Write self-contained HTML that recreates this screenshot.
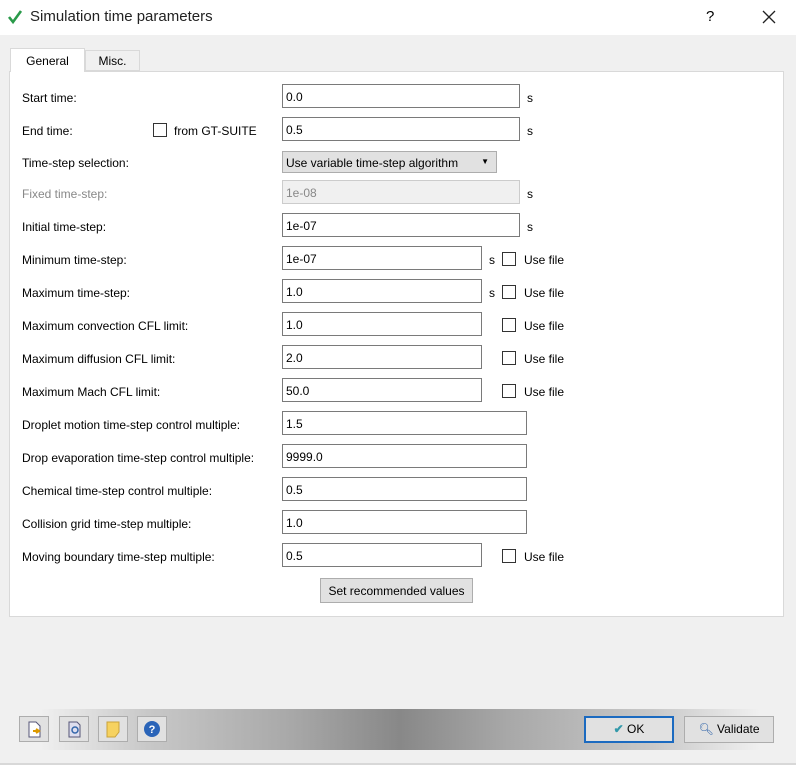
<!DOCTYPE html>
<html><head><style>
body{margin:0;width:796px;height:765px;background:#f0f0f0;font-family:"Liberation Sans",sans-serif;font-size:12px;color:#000;position:relative;overflow:hidden}
.a{position:absolute}
.title{left:0;top:0;width:796px;height:35px;background:#fff}
.in{position:absolute;height:24px;border:1px solid #7a7a7a;background:#fff;box-sizing:border-box;padding:6px 3px 0;font-size:12px;line-height:13px}
.lb{position:absolute;left:22px;line-height:14px}
.cb{position:absolute;width:14px;height:14px;border:1px solid #333;background:#fff;box-sizing:border-box}
.btn{position:absolute;top:716px;width:30px;height:26px;border:1px solid #adadad;background:#e1e1e1;box-sizing:border-box}
</style></head><body>
<div class="a title"></div>
<svg class="a" style="left:7px;top:9px" width="16" height="16"><path d="M2 8 L6 13 L14 2" stroke="#2a9a4a" stroke-width="2.6" fill="none"/></svg>
<div class="a" style="left:30px;top:8px;font-size:15px;color:#222">Simulation time parameters</div>
<div class="a" style="left:706px;top:8px;font-size:15px">?</div>
<svg class="a" style="left:762px;top:10px" width="14" height="14"><path d="M1 1L13 13M13 1L1 13" stroke="#222" stroke-width="1.3"/></svg>
<div class="a" style="left:10px;top:48px;width:75px;height:24px;background:#fff;border:1px solid #d9d9d9;border-bottom:none;box-sizing:border-box;z-index:2;text-align:center;line-height:24px">General</div>
<div class="a" style="left:85px;top:50px;width:55px;height:21px;background:#f0f0f0;border:1px solid #d9d9d9;box-sizing:border-box;text-align:center;line-height:20px">Misc.</div>
<div class="a" style="left:9px;top:71px;width:775px;height:546px;background:#fff;border:1px solid #d9d9d9;box-sizing:border-box"></div>

<div class="lb" style="top:91px">Start time:</div><div class="in" style="left:282px;top:84px;width:238px">0.0</div><div class="a" style="left:527px;top:91px">s</div>
<div class="lb" style="top:124px">End time:</div><div class="cb" style="left:153px;top:123px"></div><div class="a" style="left:174px;top:124px">from GT-SUITE</div><div class="in" style="left:282px;top:117px;width:238px">0.5</div><div class="a" style="left:527px;top:124px">s</div>
<div class="lb" style="top:156px">Time-step selection:</div><div class="a" style="left:282px;top:151px;width:215px;height:22px;background:#e1e1e1;border:1px solid #adadad;box-sizing:border-box;padding:4px 3px">Use variable time-step algorithm<span style="position:absolute;right:7px;top:5px;font-size:8px">▼</span></div>
<div class="lb" style="top:187px;color:#888">Fixed time-step:</div><div class="in" style="left:282px;top:180px;width:238px;background:#f0f0f0;border-color:#ccc;color:#888">1e-08</div><div class="a" style="left:527px;top:187px">s</div>
<div class="lb" style="top:220px">Initial time-step:</div><div class="in" style="left:282px;top:213px;width:238px">1e-07</div><div class="a" style="left:527px;top:220px">s</div>
<div class="lb" style="top:253px">Minimum time-step:</div><div class="in" style="left:282px;top:246px;width:200px">1e-07</div><div class="a" style="left:489px;top:253px">s</div><div class="cb" style="left:502px;top:252px"></div><div class="a" style="left:524px;top:253px">Use file</div>
<div class="lb" style="top:286px">Maximum time-step:</div><div class="in" style="left:282px;top:279px;width:200px">1.0</div><div class="a" style="left:489px;top:286px">s</div><div class="cb" style="left:502px;top:285px"></div><div class="a" style="left:524px;top:286px">Use file</div>
<div class="lb" style="top:319px">Maximum convection CFL limit:</div><div class="in" style="left:282px;top:312px;width:200px">1.0</div><div class="cb" style="left:502px;top:318px"></div><div class="a" style="left:524px;top:319px">Use file</div>
<div class="lb" style="top:352px">Maximum diffusion CFL limit:</div><div class="in" style="left:282px;top:345px;width:200px">2.0</div><div class="cb" style="left:502px;top:351px"></div><div class="a" style="left:524px;top:352px">Use file</div>
<div class="lb" style="top:385px">Maximum Mach CFL limit:</div><div class="in" style="left:282px;top:378px;width:200px">50.0</div><div class="cb" style="left:502px;top:384px"></div><div class="a" style="left:524px;top:385px">Use file</div>
<div class="lb" style="top:418px">Droplet motion time-step control multiple:</div><div class="in" style="left:282px;top:411px;width:245px">1.5</div>
<div class="lb" style="top:451px">Drop evaporation time-step control multiple:</div><div class="in" style="left:282px;top:444px;width:245px">9999.0</div>
<div class="lb" style="top:484px">Chemical time-step control multiple:</div><div class="in" style="left:282px;top:477px;width:245px">0.5</div>
<div class="lb" style="top:517px">Collision grid time-step multiple:</div><div class="in" style="left:282px;top:510px;width:245px">1.0</div>
<div class="lb" style="top:550px">Moving boundary time-step multiple:</div><div class="in" style="left:282px;top:543px;width:200px">0.5</div><div class="cb" style="left:502px;top:549px"></div><div class="a" style="left:524px;top:550px">Use file</div>
<div class="a" style="left:320px;top:578px;width:153px;height:25px;background:#e1e1e1;border:1px solid #adadad;box-sizing:border-box;text-align:center;line-height:24px">Set recommended values</div>

<div class="a" style="left:40px;top:709px;width:720px;height:41px;background:linear-gradient(90deg,#f0f0f0 0%,#c8c8c8 15%,#a8a8a8 35%,#888 50%,#a8a8a8 65%,#c8c8c8 85%,#f0f0f0 100%)"></div>
<div class="a" style="left:0;top:763px;width:796px;height:2px;background:#d8d8d8"></div>
<div class="btn" style="left:19px"><svg width="28" height="24"><path d="M9 5h7l4 4v11H9z" fill="#fff" stroke="#557"/><path d="M13 14h5M16 12l3 2-3 2" stroke="#d90" stroke-width="2" fill="none"/></svg></div>
<div class="btn" style="left:59px"><svg width="28" height="24"><path d="M9 5h8l3 3v12H9z" fill="#dde" stroke="#557"/><circle cx="15" cy="13" r="3" fill="none" stroke="#36a" stroke-width="1.5"/></svg></div>
<div class="btn" style="left:98px"><svg width="28" height="24"><path d="M8 5h12v10l-4 5H8z" fill="#f6d260" stroke="#c9a23a"/></svg></div>
<div class="btn" style="left:137px"><svg width="28" height="24"><circle cx="14" cy="12" r="8" fill="#2a64b8"/><text x="14" y="16" fill="#fff" font-size="11" font-weight="bold" text-anchor="middle" font-family="Liberation Sans">?</text></svg></div>
<div class="a" style="left:584px;top:716px;width:90px;height:27px;border:2px solid #1b6ac0;background:#e1e1e1;box-sizing:border-box;text-align:center;line-height:23px"><span style="color:#39a;font-weight:bold">✔</span> OK</div>
<div class="a" style="left:684px;top:716px;width:90px;height:27px;border:1px solid #adadad;background:#e1e1e1;box-sizing:border-box;text-align:center;line-height:25px"><span style="color:#36a">🔍︎</span> Validate</div>
</body></html>
